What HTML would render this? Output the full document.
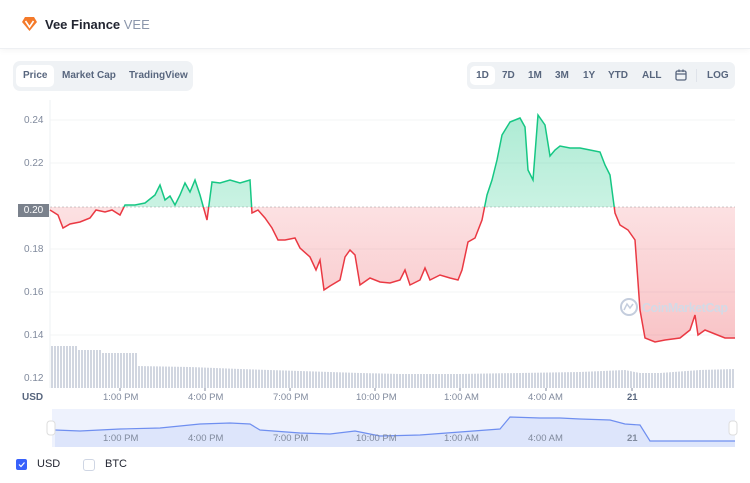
<!DOCTYPE html>
<html><head><style>
body{margin:0;width:750px;height:483px;background:#fff;font-family:"Liberation Sans",sans-serif;overflow:hidden;position:relative}
.hdr{position:absolute;left:0;top:0;width:750px;height:48px;border-bottom:1px solid #eef0f3;box-shadow:0 2px 6px rgba(0,0,0,.04)}
.title{position:absolute;left:45px;top:17px;font-size:13px;font-weight:bold;color:#222531}
.title span{color:#8b96ab;font-weight:normal}
.tabs{position:absolute;left:13px;top:61px;width:180px;height:30px;background:#eff2f5;border-radius:7px}
.tab{position:absolute;top:4px;height:22px;line-height:22px;font-size:10px;font-weight:bold;color:#58667e}
.tabs .on{background:#fff;border-radius:5px;color:#58667e;padding:0 7px;left:3px}
.rng{position:absolute;left:467px;top:62px;width:268px;height:27px;background:#eff2f5;border-radius:6px}
.rng div{position:absolute;top:4px;height:19px;line-height:19px;font-size:10px;font-weight:bold;color:#58667e}
.lbl{position:absolute;font-size:10px;color:#808a9d}
.x{position:absolute;font-size:9.5px;color:#808a9d;top:392px}
.xn{position:absolute;font-size:9.5px;color:#808a9d;top:433px}
</style></head><body>
<div class="hdr">
<svg style="position:absolute;left:22px;top:17px" width="15" height="14" viewBox="0 0 15 14"><polygon points="3,0 12,0 15,5 7.5,14 0,5" fill="#f47a2a"/><path d="M3.5 4 L7.5 10 L11.5 4" stroke="#fff" stroke-width="1.6" fill="none"/></svg>
<div class="title">Vee Finance <span>VEE</span></div>
</div>
<div class="tabs"><div class="tab on">Price</div><div class="tab" style="left:49px">Market Cap</div><div class="tab" style="left:116px">TradingView</div></div>
<div class="rng">
<div style="left:3px;width:25px;background:#fff;border-radius:5px;text-align:center">1D</div>
<div style="left:35px">7D</div><div style="left:61px">1M</div><div style="left:88px">3M</div><div style="left:116px">1Y</div><div style="left:141px">YTD</div><div style="left:175px">ALL</div>
<svg style="position:absolute;left:208px;top:7px" width="12" height="12" viewBox="0 0 12 12"><rect x="1" y="2" width="10" height="9" rx="1.5" stroke="#58667e" stroke-width="1.3" fill="none"/><path d="M1 5H11M4 0.5V3M8 0.5V3" stroke="#58667e" stroke-width="1.3"/></svg>
<div style="left:229px;top:7px;width:1px;height:13px;background:#dfe3ea"></div>
<div style="left:240px">LOG</div>
</div>
<div class="lbl" style="left:24px;top:115px">0.24</div>
<div class="lbl" style="left:24px;top:158px">0.22</div>
<div class="lbl" style="left:24px;top:244px">0.18</div>
<div class="lbl" style="left:24px;top:287px">0.16</div>
<div class="lbl" style="left:24px;top:330px">0.14</div>
<div class="lbl" style="left:24px;top:373px">0.12</div>
<div style="position:absolute;left:18px;top:204px;width:31px;height:13px;background:#7a818c;color:#fff;font-size:10px;line-height:13px;text-align:center">0.20</div>
<div style="position:absolute;left:22px;top:392px;font-size:10px;font-weight:bold;color:#58667e">USD</div>
<svg style="position:absolute;left:0;top:0" width="750" height="483">
<defs>
<linearGradient id="gg" x1="0" y1="0" x2="0" y2="1"><stop offset="0" stop-color="#16c784" stop-opacity=".35"/><stop offset="1" stop-color="#16c784" stop-opacity=".05"/></linearGradient>
<linearGradient id="rg" x1="0" y1="0" x2="0" y2="1"><stop offset="0" stop-color="#ea3943" stop-opacity=".05"/><stop offset="1" stop-color="#ea3943" stop-opacity=".3"/></linearGradient>
<clipPath id="top"><rect x="0" y="0" width="750" height="207"/></clipPath>
<clipPath id="bot"><rect x="0" y="207" width="750" height="200"/></clipPath>
<pattern id="bars" width="3" height="10" patternUnits="userSpaceOnUse"><rect x="0" y="0" width="2" height="10" fill="#d1d6e0"/></pattern>
</defs>
<g stroke="#f3f4f6" stroke-width="1"><line x1="50" y1="120" x2="735" y2="120"/><line x1="50" y1="163" x2="735" y2="163"/><line x1="50" y1="249" x2="735" y2="249"/><line x1="50" y1="292" x2="735" y2="292"/><line x1="50" y1="335" x2="735" y2="335"/></g>
<line x1="50" y1="207" x2="735" y2="207" stroke="#ccc" stroke-dasharray="2,2"/>
<line x1="50" y1="100" x2="50" y2="388" stroke="#eef0f3"/>
<polygon fill="url(#bars)" points="50,346 78,346 78,350 101,350 101,353 137,353 137,366 190,367 240,369 300,371 360,373 400,374 460,374 520,373 580,372 625,370 640,373 660,373 700,370 735,369 735,388 50,388"/>
<g clip-path="url(#top)"><polygon fill="url(#gg)" points="50,207 50,210 58,215 63,228 70,224 80,222 90,218 96,210 105,212 112,210 120,215 125,205 135,205 145,203 155,195 160,185 165,200 170,196 175,205 180,195 185,183 190,192 195,180 200,195 207,220 212,182 220,183 230,180 240,183 250,180 252,213 258,210 265,218 272,228 278,240 285,240 295,238 300,248 310,257 316,270 320,260 324,290 330,286 340,280 345,257 350,250 355,255 360,285 370,278 380,282 390,283 400,280 405,270 410,285 420,280 425,268 430,280 440,275 450,278 458,280 462,270 468,242 475,238 482,220 487,195 492,180 497,160 502,135 510,122 520,118 525,127 528,170 533,180 538,115 545,125 550,156 555,150 560,146 570,148 580,148 590,150 600,152 605,165 610,175 615,213 620,225 628,230 635,240 640,310 645,338 655,342 665,340 680,338 690,330 695,315 698,335 705,330 715,334 725,338 735,338 735,207"/></g>
<g clip-path="url(#bot)"><polygon fill="url(#rg)" points="50,207 50,210 58,215 63,228 70,224 80,222 90,218 96,210 105,212 112,210 120,215 125,205 135,205 145,203 155,195 160,185 165,200 170,196 175,205 180,195 185,183 190,192 195,180 200,195 207,220 212,182 220,183 230,180 240,183 250,180 252,213 258,210 265,218 272,228 278,240 285,240 295,238 300,248 310,257 316,270 320,260 324,290 330,286 340,280 345,257 350,250 355,255 360,285 370,278 380,282 390,283 400,280 405,270 410,285 420,280 425,268 430,280 440,275 450,278 458,280 462,270 468,242 475,238 482,220 487,195 492,180 497,160 502,135 510,122 520,118 525,127 528,170 533,180 538,115 545,125 550,156 555,150 560,146 570,148 580,148 590,150 600,152 605,165 610,175 615,213 620,225 628,230 635,240 640,310 645,338 655,342 665,340 680,338 690,330 695,315 698,335 705,330 715,334 725,338 735,338 735,207"/></g>
<polyline fill="none" stroke-width="1.5" points="50,210 58,215 63,228 70,224 80,222 90,218 96,210 105,212 112,210 120,215 125,205 135,205 145,203 155,195 160,185 165,200 170,196 175,205 180,195 185,183 190,192 195,180 200,195 207,220 212,182 220,183 230,180 240,183 250,180 252,213 258,210 265,218 272,228 278,240 285,240 295,238 300,248 310,257 316,270 320,260 324,290 330,286 340,280 345,257 350,250 355,255 360,285 370,278 380,282 390,283 400,280 405,270 410,285 420,280 425,268 430,280 440,275 450,278 458,280 462,270 468,242 475,238 482,220 487,195 492,180 497,160 502,135 510,122 520,118 525,127 528,170 533,180 538,115 545,125 550,156 555,150 560,146 570,148 580,148 590,150 600,152 605,165 610,175 615,213 620,225 628,230 635,240 640,310 645,338 655,342 665,340 680,338 690,330 695,315 698,335 705,330 715,334 725,338 735,338" stroke="#16c784" clip-path="url(#top)"/>
<polyline fill="none" stroke-width="1.5" stroke="#ea3943" clip-path="url(#bot)" points="50,210 58,215 63,228 70,224 80,222 90,218 96,210 105,212 112,210 120,215 125,205 135,205 145,203 155,195 160,185 165,200 170,196 175,205 180,195 185,183 190,192 195,180 200,195 207,220 212,182 220,183 230,180 240,183 250,180 252,213 258,210 265,218 272,228 278,240 285,240 295,238 300,248 310,257 316,270 320,260 324,290 330,286 340,280 345,257 350,250 355,255 360,285 370,278 380,282 390,283 400,280 405,270 410,285 420,280 425,268 430,280 440,275 450,278 458,280 462,270 468,242 475,238 482,220 487,195 492,180 497,160 502,135 510,122 520,118 525,127 528,170 533,180 538,115 545,125 550,156 555,150 560,146 570,148 580,148 590,150 600,152 605,165 610,175 615,213 620,225 628,230 635,240 640,310 645,338 655,342 665,340 680,338 690,330 695,315 698,335 705,330 715,334 725,338 735,338"/>
<circle cx="629" cy="307" r="8" fill="none" stroke="#c4cddd" stroke-width="2"/>
<path d="M624 310 L627 304 L630 308 L633 304" stroke="#c4cddd" stroke-width="1.5" fill="none"/>
<text x="642" y="312" font-size="12.5" font-weight="bold" fill="#d3dae6" font-family="Liberation Sans" textLength="86">CoinMarketCap</text>
<g stroke="#808a9d"><line x1="120" y1="388" x2="120" y2="391"/><line x1="205" y1="388" x2="205" y2="391"/><line x1="290" y1="388" x2="290" y2="391"/><line x1="375" y1="388" x2="375" y2="391"/><line x1="460" y1="388" x2="460" y2="391"/><line x1="546" y1="388" x2="546" y2="391"/><line x1="632" y1="388" x2="632" y2="391"/></g>
<rect x="52" y="409" width="683" height="38" fill="#eef2fd"/>
<polygon fill="#dde5fb" points="55,430 80,431 120,429 160,428 200,424 230,423 250,424 260,430 300,433 330,434 355,431 380,436 420,435 460,432 500,429 510,417 540,418 560,418 580,419 610,420 625,424 640,425 650,441 700,441 735,441 735,447 55,447"/>
<polyline fill="none" stroke="#6f8ff0" stroke-width="1.2" points="55,430 80,431 120,429 160,428 200,424 230,423 250,424 260,430 300,433 330,434 355,431 380,436 420,435 460,432 500,429 510,417 540,418 560,418 580,419 610,420 625,424 640,425 650,441 700,441 735,441"/>
<rect x="47" y="421" width="8" height="14" rx="3" fill="#fff" stroke="#ddd"/>
<rect x="729" y="421" width="8" height="14" rx="3" fill="#fff" stroke="#ddd"/>
<rect x="16" y="459" width="11" height="11" rx="2" fill="#3861fb"/>
<path d="M19 464.5l2 2 3.5-4" stroke="#fff" stroke-width="1.2" fill="none"/>
<rect x="83.5" y="459.5" width="11" height="11" rx="2.5" fill="#fff" stroke="#cfd6e4"/>
</svg>
<div class="x" style="left:103px">1:00 PM</div><div class="x" style="left:188px">4:00 PM</div><div class="x" style="left:273px">7:00 PM</div><div class="x" style="left:356px">10:00 PM</div><div class="x" style="left:444px">1:00 AM</div><div class="x" style="left:528px">4:00 AM</div><div class="x" style="left:627px;font-weight:bold;color:#58667e">21</div>
<div class="xn" style="left:103px">1:00 PM</div><div class="xn" style="left:188px">4:00 PM</div><div class="xn" style="left:273px">7:00 PM</div><div class="xn" style="left:356px">10:00 PM</div><div class="xn" style="left:444px">1:00 AM</div><div class="xn" style="left:528px">4:00 AM</div><div class="xn" style="left:627px;font-weight:bold">21</div>
<div style="position:absolute;left:37px;top:458px;font-size:11px;color:#222531">USD</div>
<div style="position:absolute;left:105px;top:458px;font-size:11px;color:#222531">BTC</div>
</body></html>
